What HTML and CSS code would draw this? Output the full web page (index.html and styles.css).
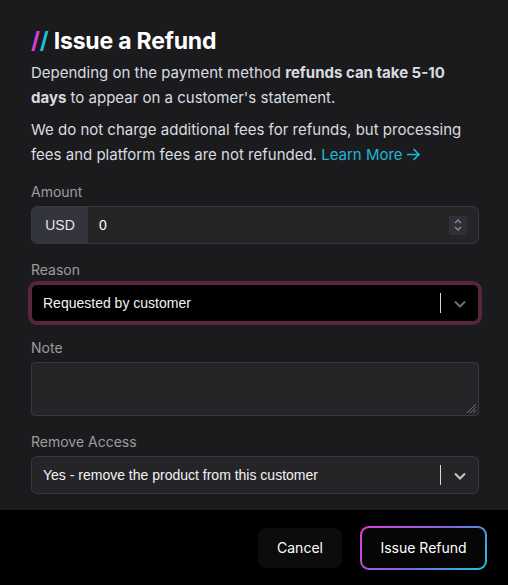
FILE: index.html
```html
<!DOCTYPE html>
<html lang="en">

<head>
    <meta charset="UTF-8">
    <title>Issue a Refund</title>
    <link rel="stylesheet" href="styles.css">
</head>

<body>
    <div class="modal">
        <div class="modal-body">
            <h2 class="title"><span class="slash-a">/</span><span class="slash-b">/</span> Issue a Refund</h2>
            <p class="desc">
                Depending on the payment method <strong>refunds can take 5-10 days</strong> to appear on a customer's
                statement.
            </p>
            <p class="desc">
                We do not charge additional fees for refunds, but processing fees and platform fees are not refunded.
                <a href="#" class="learn">Learn More<svg width="15" height="13" viewBox="0 0 15 13"><path d="M1 6.5h12M7.5 1l5.5 5.5-5.5 5.5" fill="none" stroke="currentColor" stroke-width="1.6"/></svg></a>
            </p>

            <div class="fields">
                <div class="field">
                    <label class="field-label">Amount</label>
                    <div class="input-group">
                        <span class="addon">USD</span>
                        <span class="input-value">0</span>
                        <span class="spinner">
                            <svg width="10" height="14" viewBox="0 0 10 14"><path d="M2 5l3-3 3 3M2 9l3 3 3-3" fill="none" stroke="#8a8a94" stroke-width="1.4"/></svg>
                        </span>
                    </div>
                </div>

                <div class="field">
                    <label class="field-label">Reason</label>
                    <div class="select focused">
                        <span class="select-value">Requested by customer</span>
                        <span class="sep"></span>
                        <svg class="chev" width="12" height="8" viewBox="0 0 12 8"><path d="M1 1.5l5 5 5-5" fill="none" stroke="#6e6e74" stroke-width="2"/></svg>
                    </div>
                </div>

                <div class="field">
                    <label class="field-label">Note</label>
                    <div class="textarea">
                        <svg class="grip" width="12" height="12" viewBox="0 0 12 12"><path d="M11 2L2 11M11 5L5 11M11 8L8 11" stroke="#6a6a70" stroke-width="1"/></svg>
                    </div>
                </div>

                <div class="field">
                    <label class="field-label">Remove Access</label>
                    <div class="select">
                        <span class="select-value">Yes - remove the product from this customer</span>
                        <span class="sep"></span>
                        <svg class="chev" width="12" height="8" viewBox="0 0 12 8"><path d="M1 1.5l5 5 5-5" fill="none" stroke="#c9c9cc" stroke-width="2"/></svg>
                    </div>
                </div>
            </div>
        </div>

        <div class="modal-footer">
            <button class="btn btn-cancel">Cancel</button>
            <button class="btn btn-primary">Issue Refund</button>
        </div>
    </div>
</body>

</html>
```

FILE: styles.css
```css
* {
    margin: 0;
    padding: 0;
    box-sizing: border-box;
}

body {
    background: #1b1b1d;
    font-family: Inter, "Liberation Sans", sans-serif;
    color: #d9dbe0;
}

.modal {
    width: 508px;
    height: 585px;
    display: flex;
    flex-direction: column;
}

.modal-body {
    flex-grow: 1;
    padding: 26px 29px 0 31px;
}

.title {
    font-size: 23px;
    font-weight: 700;
    color: #fff;
    line-height: 30px;
    letter-spacing: -0.2px;
    margin-bottom: 5px;
}

.slash-a {
    color: #d63ee0;
}

.slash-b {
    color: #1cc0d8;
}

.desc {
    font-size: 15px;
    line-height: 24.5px;
    margin-bottom: 8px;
}

.desc strong {
    font-weight: 700;
}

.learn {
    color: #1fb6d4;
    text-decoration: none;
}

.learn svg {
    margin-left: 3px;
    vertical-align: -1px;
}

.fields {
    margin-top: 16px;
}

.field + .field {
    margin-top: 17px;
}

.field-label {
    display: block;
    font-size: 14px;
    color: #9b9ca2;
    margin-bottom: 5px;
    line-height: 18px;
}

.input-group {
    display: flex;
    align-items: center;
    height: 38px;
    border: 1px solid #38383e;
    border-radius: 6px;
    background: #252528;
    overflow: hidden;
}

.addon {
    width: 56px;
    height: 100%;
    background: #34343c;
    display: flex;
    align-items: center;
    justify-content: center;
    font-size: 14px;
    color: #e4e4e8;
    font-family: "Liberation Sans", sans-serif;
}

.input-value {
    flex-grow: 1;
    padding-left: 11px;
    font-size: 14px;
    color: #fff;
    font-family: "Liberation Sans", sans-serif;
}

.spinner {
    width: 18px;
    height: 19px;
    background: #2f2f38;
    display: flex;
    align-items: center;
    justify-content: center;
    margin-right: 11px;
}

.select {
    display: flex;
    align-items: center;
    height: 38px;
    border: 1px solid #38383e;
    border-radius: 6px;
    background: #252528;
    font-family: "Liberation Sans", sans-serif;
    font-size: 14px;
    color: #f2f2f4;
}

.select.focused {
    background: #000;
    border-color: #5a2840;
    box-shadow: 0 0 0 3px #55263c;
}

.select-value {
    flex-grow: 1;
    padding-left: 11px;
}

.sep {
    width: 1px;
    height: 20px;
    background: #d8d8dc;
}

.chev {
    margin: 1px 12px 0 13px;
}

.textarea {
    position: relative;
    height: 54px;
    border: 1px solid #38383e;
    border-radius: 4px;
    background: #252528;
}

.grip {
    position: absolute;
    right: 1px;
    bottom: 1px;
}

.modal-footer {
    background: #000;
    height: 75px;
    display: flex;
    align-items: center;
    justify-content: flex-end;
    gap: 18px;
    padding-right: 21px;
}

.btn {
    font-family: Inter, "Liberation Sans", sans-serif;
    font-size: 14px;
    color: #fff;
    cursor: pointer;
    border: none;
}

.btn-cancel {
    width: 84px;
    height: 40px;
    background: #0c0c0d;
    border-radius: 8px;
}

.btn-primary {
    width: 127px;
    height: 44px;
    border-radius: 9px;
    border: 2px solid transparent;
    background: linear-gradient(#060606, #060606) padding-box,
        linear-gradient(135deg, #e040d8, #7a6ad8 55%, #1ec8e0) border-box;
}
```
